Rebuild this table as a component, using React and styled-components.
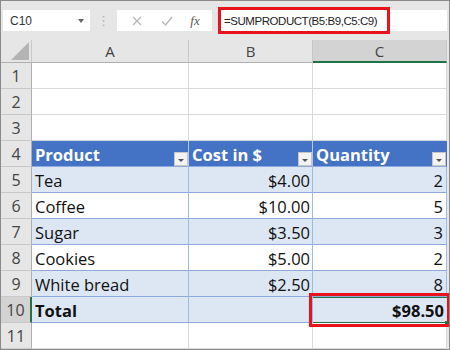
import React from 'react';
import styled, { createGlobalStyle } from 'styled-components';

const GlobalStyle = createGlobalStyle`
  body {
    margin: 0;
    background: #ffffff;
  }
`;

const columns = ['A', 'B', 'C'];

const tableRows = [
  { product: 'Tea', cost: '$4.00', qty: '2' },
  { product: 'Coffee', cost: '$10.00', qty: '5' },
  { product: 'Sugar', cost: '$3.50', qty: '3' },
  { product: 'Cookies', cost: '$5.00', qty: '2' },
  { product: 'White bread', cost: '$2.50', qty: '8' },
];

const App = () => {
  return (
    <>
      <GlobalStyle />
      <Frame>
        <FormulaBar>
          <NameBox>
            <span>C10</span>
            <Caret />
          </NameBox>
          <Grip>⋮</Grip>
          <ButtonBox>
            <svg width="12" height="12" viewBox="0 0 12 12">
              <path d="M2 2 L10 10 M10 2 L2 10" stroke="#b8b8b8" strokeWidth="1.3" fill="none" />
            </svg>
            <svg width="14" height="12" viewBox="0 0 14 12">
              <path d="M2 6.5 L5.5 10 L12 2" stroke="#b8b8b8" strokeWidth="1.4" fill="none" />
            </svg>
            <Fx>fx</Fx>
          </ButtonBox>
          <FormulaBox>
            <FormulaText>=SUMPRODUCT(B5:B9,C5:C9)</FormulaText>
            <FormulaMark />
          </FormulaBox>
        </FormulaBar>

        <Sheet>
          <Corner>
            <svg width="18" height="18" viewBox="0 0 18 18">
              <path d="M18 0 L18 18 L0 18 Z" fill="#b4b4b4" />
            </svg>
          </Corner>
          {columns.map((c) => (
            <ColHead key={c} $active={c === 'C'}>{c}</ColHead>
          ))}
          <Edge />

          {[1, 2, 3].map((n) => (
            <React.Fragment key={n}>
              <RowHead>{n}</RowHead>
              <Cell />
              <Cell />
              <Cell />
              <Edge />
            </React.Fragment>
          ))}

          <RowHead>4</RowHead>
          <HeadCell><span>Product</span><FilterButton /></HeadCell>
          <HeadCell><span>Cost in $</span><FilterButton /></HeadCell>
          <HeadCell $last><span>Quantity</span><FilterButton /></HeadCell>
          <Edge />

          {tableRows.map((r, i) => (
            <React.Fragment key={r.product}>
              <RowHead>{i + 5}</RowHead>
              <DataCell $band={i % 2 === 0}>{r.product}</DataCell>
              <DataCell $band={i % 2 === 0} $num>{r.cost}</DataCell>
              <DataCell $band={i % 2 === 0} $num $last>{r.qty}</DataCell>
              <Edge />
            </React.Fragment>
          ))}

          <RowHead $active>10</RowHead>
          <DataCell $band $bold>Total</DataCell>
          <DataCell $band />
          <SelectedCell>
            $98.50
            <CellMark />
            <FillHandle />
          </SelectedCell>
          <Edge />

          <RowHead>11</RowHead>
          <Cell />
          <Cell />
          <Cell />
          <Edge />
        </Sheet>
      </Frame>
    </>
  );
};

const Frame = styled.div`
  width: 450px;
  height: 350px;
  box-sizing: border-box;
  border: 1px solid #8a8a8a;
  background: #e6e6e6;
  overflow: hidden;
  font-family: "Open Sans", "Liberation Sans", sans-serif;
`;

const FormulaBar = styled.div`
  height: 39px;
  display: flex;
  align-items: center;
  padding: 0 2px 0 2px;
  box-sizing: border-box;
  background: #e6e6e6;
`;

const NameBox = styled.div`
  width: 87px;
  height: 21px;
  box-sizing: border-box;
  background: #fff;
  display: flex;
  align-items: center;
  justify-content: space-between;
  padding: 0 6px 0 7px;
  font-family: "Liberation Sans", Arial, sans-serif;
  font-size: 12px;
  color: #333;
`;

const Caret = styled.span`
  width: 0;
  height: 0;
  border-left: 3px solid transparent;
  border-right: 3px solid transparent;
  border-top: 4px solid #666;
`;

const Grip = styled.span`
  width: 27px;
  text-align: center;
  color: #b4b4b4;
  font-size: 13px;
  font-family: "DejaVu Sans", sans-serif;
`;

const ButtonBox = styled.div`
  width: 95px;
  height: 21px;
  background: #fff;
  display: flex;
  align-items: center;
  justify-content: space-around;
  padding: 0 4px 0 6px;
  box-sizing: border-box;
`;

const Fx = styled.span`
  font-family: "Liberation Serif", serif;
  font-style: italic;
  font-size: 13px;
  color: #555;
`;

const FormulaBox = styled.div`
  position: relative;
  flex: 1;
  margin-left: 6px;
  height: 21px;
  background: #fff;
  display: flex;
  align-items: center;
`;

const FormulaText = styled.span`
  padding-left: 6px;
  font-family: "Liberation Sans", Arial, sans-serif;
  font-size: 11.5px;
  color: #222;
  letter-spacing: -0.45px;
`;

const FormulaMark = styled.span`
  position: absolute;
  left: 0;
  top: -3px;
  width: 172px;
  height: 27px;
  box-sizing: border-box;
  border: 3px solid #e8131b;
`;

const Sheet = styled.div`
  display: grid;
  grid-template-columns: 31px 157px 124px 134px 1fr;
  grid-template-rows: 23px repeat(11, 26px);
  background: #fff;
  font-size: 16.5px;
  color: #111;
`;

const Corner = styled.div`
  background: #e6e6e6;
  border-right: 1px solid #c8c8c8;
  border-bottom: 1px solid #b0b0b0;
  display: flex;
  align-items: flex-end;
  justify-content: flex-end;
  padding: 0 2px 2px 0;
`;

const ColHead = styled.div`
  background: ${(p) => (p.$active ? '#d3d3d3' : '#e6e6e6')};
  border-right: 1px solid #c8c8c8;
  border-bottom: ${(p) => (p.$active ? '2px solid #217346' : '1px solid #b0b0b0')};
  display: flex;
  align-items: center;
  justify-content: center;
  font-size: 15px;
  color: #444;
`;

const Edge = styled.div`
  background: #e6e6e6;
`;

const RowHead = styled.div`
  background: ${(p) => (p.$active ? '#d3d3d3' : '#e6e6e6')};
  border-right: ${(p) => (p.$active ? '2px solid #217346' : '1px solid #b0b0b0')};
  border-bottom: 1px solid #c8c8c8;
  display: flex;
  align-items: center;
  justify-content: center;
  font-size: 16px;
  color: #444;
`;

const Cell = styled.div`
  border-right: 1px solid #d9d9d9;
  border-bottom: 1px solid #d9d9d9;
`;

const HeadCell = styled.div`
  background: #4472c4;
  border-right: 1px solid ${(p) => (p.$last ? '#4472c4' : '#b4c6e7')};
  border-bottom: 1px solid #8eaadb;
  display: flex;
  align-items: flex-end;
  justify-content: space-between;
  padding-left: 3px;
  color: #fff;
  font-weight: 700;

  span {
    align-self: center;
    padding-top: 1px;
  }
`;

const FilterButton = styled.div`
  width: 14px;
  height: 14px;
  box-sizing: border-box;
  background: #f3f3f3;
  border: 1px solid #c6c6c6;
  display: flex;
  align-items: center;
  justify-content: center;

  &::after {
    content: '';
    margin-top: 2px;
    border-left: 3px solid transparent;
    border-right: 3px solid transparent;
    border-top: 3px solid #555;
  }
`;

const DataCell = styled.div`
  background: ${(p) => (p.$band ? '#dde7f4' : '#fff')};
  border-right: 1px solid #9dbce3;
  border-bottom: 1px solid #8eaadb;
  display: flex;
  align-items: center;
  justify-content: ${(p) => (p.$num ? 'flex-end' : 'flex-start')};
  padding: 1px ${(p) => (p.$last ? '3px' : '2px')} 0 3px;
  font-weight: ${(p) => (p.$bold ? 700 : 400)};
  white-space: nowrap;
`;

const SelectedCell = styled.div`
  position: relative;
  background: #dde7f4;
  border-top: 1px solid #217346;
  border-bottom: 1px solid #217346;
  display: flex;
  align-items: center;
  justify-content: flex-end;
  padding: 0 3px 0 3px;
  font-weight: 700;
`;

const CellMark = styled.span`
  position: absolute;
  left: -4px;
  right: -3px;
  top: -5px;
  bottom: -5px;
  border: 3px solid #e8131b;
`;

const FillHandle = styled.span`
  position: absolute;
  right: -1px;
  bottom: -2px;
  width: 3px;
  height: 3px;
  background: #217346;
`;

export default App;
